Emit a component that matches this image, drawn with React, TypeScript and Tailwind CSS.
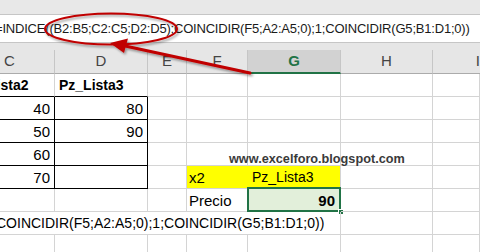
import React from "react";

function Cell({
  children,
  b = "border-r border-b border-[#d4d4d4]",
  className = "",
  span = "",
}: {
  children?: React.ReactNode;
  b?: string;
  className?: string;
  span?: string;
}) {
  return (
    <div
      className={`${b} ${span} ${className} relative h-[23px] overflow-hidden whitespace-nowrap flex items-end pb-[2px] text-[14px] leading-[17px] text-black`}
    >
      {children}
    </div>
  );
}

function HeadCell({ children, className = "" }: { children?: React.ReactNode; className?: string }) {
  return (
    <div className={`h-[24px] flex items-center overflow-hidden text-[15px] ${className}`}>
      {children}
    </div>
  );
}

export default function App() {
  const blackData = "border-r border-b border-black";
  return (
    <div className="relative w-[480px] h-[252px] overflow-hidden bg-white font-['Liberation_Sans',Arial,sans-serif]">
      {/* top ribbon strip */}
      <div className="h-[15px] bg-[#e8e8e8] border-b border-[#c6c6c6]" />
      {/* formula bar */}
      <div className="h-[28px] bg-white border-b border-[#c6c6c6] flex items-center overflow-hidden whitespace-nowrap">
        <span className="ml-[-5px] text-[13px] tracking-[-0.2px] text-[#1a1a1a]">
          =INDICE((B2:B5;C2:C5;D2:D5);COINCIDIR(F5;A2:A5;0);1;COINCIDIR(G5;B1:D1;0))
        </span>
      </div>
      <div className="h-[7px] bg-[#e6e6e6]" />
      {/* sheet grid */}
      <div className="grid grid-cols-[55px_93px_39px_61px_93px_92px_47px]">
        {/* header row */}
        <HeadCell className="bg-[#e6e6e6] border-r border-b border-r-[#c6c6c6] border-b-[#ababab] pl-[4px] text-[#444]">C</HeadCell>
        <HeadCell className="bg-[#e6e6e6] border-r border-b border-r-[#c6c6c6] border-b-[#ababab] justify-center text-[#444]">D</HeadCell>
        <HeadCell className="bg-[#e6e6e6] border-r border-b border-r-[#c6c6c6] border-b-[#ababab] justify-center text-[#444]">E</HeadCell>
        <HeadCell className="bg-[#e6e6e6] border-r border-b border-r-[#c6c6c6] border-b-[#ababab] justify-center text-[#444]">F</HeadCell>
        <HeadCell className="bg-[#d2d2d2] border-r border-b-2 border-r-[#c6c6c6] border-b-[#217346] justify-center text-[#217346] font-bold">G</HeadCell>
        <HeadCell className="bg-[#e6e6e6] border-r border-b border-r-[#c6c6c6] border-b-[#ababab] justify-center text-[#444]">H</HeadCell>
        <HeadCell className="bg-[#e6e6e6] border-b border-b-[#ababab] justify-end text-[#444]">I</HeadCell>

        {/* row 1 */}
        <Cell b="border-r border-b border-r-[#d4d4d4] border-b-black" className="font-bold">
          <span className="ml-[-36px]">Pz_Lista2</span>
        </Cell>
        <Cell b="border-r border-b border-r-[#d4d4d4] border-b-black" className="font-bold pl-[4px]">
          <span>Pz_Lista3</span>
        </Cell>
        <Cell />
        <Cell />
        <Cell />
        <Cell />
        <Cell />

        {/* rows 2-5 */}
        {[
          ["40", "80"],
          ["50", "90"],
          ["60", ""],
          ["70", ""],
        ].map(([c, d], i) => (
          <React.Fragment key={i}>
            <Cell b={blackData} className="justify-end pr-[4px] text-[15px]">{c}</Cell>
            <Cell b={blackData} className="justify-end pr-[4px] text-[15px]">{d}</Cell>
            <Cell />
            {i === 3 ? (
              <>
                <Cell b="border-r border-b border-r-[#ffff00] border-b-[#d4d4d4]" className="bg-[#ffff00] pl-[2px] text-[15px]">x2</Cell>
                <Cell b="border-r border-b border-r-[#d4d4d4] border-b-[#d4d4d4]" className="bg-[#ffff00] pl-[4px]">Pz_Lista3</Cell>
              </>
            ) : (
              <>
                <Cell />
                <Cell />
              </>
            )}
            <Cell />
            <Cell />
          </React.Fragment>
        ))}

        {/* row 6 */}
        <Cell />
        <Cell />
        <Cell />
        <Cell className="pl-[2px] text-[15px]">Precio</Cell>
        <Cell className="bg-[#e2efda] justify-end pr-[5px] font-bold !overflow-visible text-[15px]">
          <span>90</span>
          <div className="absolute left-[-1px] top-[-2px] right-[-1px] bottom-[-1px] border-2 border-[#217346]" />
          <div className="absolute right-[-4px] bottom-[-4px] w-[6px] h-[6px] bg-[#217346] border border-white" />
        </Cell>
        <Cell />
        <Cell />

        {/* row 7 */}
        <Cell span="col-span-5">
          <span className="ml-[-4px]">COINCIDIR(F5;A2:A5;0);1;COINCIDIR(G5;B1:D1;0))</span>
        </Cell>
        <Cell />
        <Cell />

        {/* row 8 */}
        <Cell />
        <Cell />
        <Cell />
        <Cell />
        <Cell />
        <Cell />
        <Cell />
      </div>

      {/* watermark */}
      <div className="absolute left-[229px] top-[150px] text-[12.7px] font-bold text-[#3a3a3a] whitespace-nowrap">
        www.excelforo.blogspot.com
      </div>

      {/* annotation overlay */}
      <svg className="absolute left-0 top-0 pointer-events-none" width="480" height="252" viewBox="0 0 480 252">
        <defs>
          <filter id="sh" x="-20%" y="-50%" width="140%" height="200%">
            <feDropShadow dx="1.5" dy="2" stdDeviation="1.2" floodColor="#000" floodOpacity="0.35" />
          </filter>
        </defs>
        <g filter="url(#sh)">
          <ellipse cx="111" cy="29" rx="66" ry="15.5" fill="none" stroke="#c00000" strokeWidth="2" />
          <line x1="250" y1="73" x2="124" y2="45.8" stroke="#c00000" strokeWidth="3" strokeLinecap="round" />
          <polygon points="110,43 128,38.5 124,53" fill="#c00000" />
        </g>
      </svg>
    </div>
  );
}
